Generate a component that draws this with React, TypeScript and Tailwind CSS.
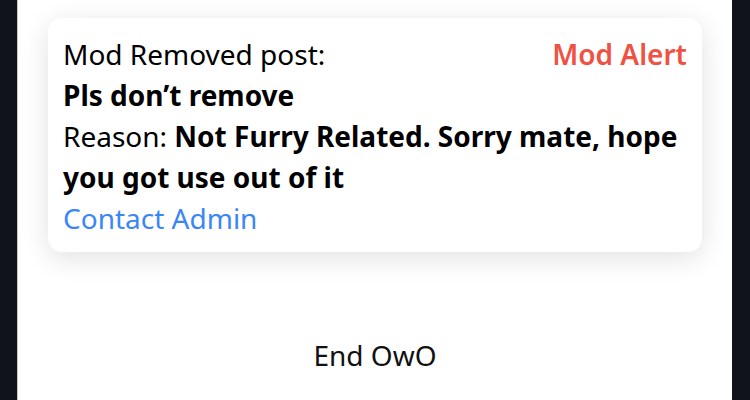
import React from 'react';

// Mod alert card inside the feed column
const ModAlertCard: React.FC = () => {
  return (
    <div className="rounded-[14px] bg-white px-[15px] pt-[16px] pb-[13px] shadow-[0_6px_28px_rgba(0,0,0,0.12)]">
      <div className="flex items-start justify-between">
        <p className="text-[28px] leading-[41px] text-black">Mod Removed post:</p>
        <p className="text-[28px] leading-[41px] font-semibold text-[#ef5143]">Mod Alert</p>
      </div>
      <p className="text-[28px] leading-[41px] font-bold text-black">Pls don’t remove</p>
      <p className="text-[28px] leading-[41px] text-black">
        Reason: <span className="font-bold">Not Furry Related. Sorry mate, hope you got use out of it</span>
      </p>
      <p className="text-[28px] leading-[41px] text-[#3b86f7]">Contact Admin</p>
    </div>
  );
};

export default function App() {
  return (
    <div
      className="flex h-[400px] w-[750px] overflow-hidden bg-[#10131b]"
      style={{ fontFamily: '"Noto Sans", "Open Sans", sans-serif' }}
    >
      <div className="ml-[17px] flex h-full w-[715px] flex-col border-l border-[#c8c8c8] bg-white px-[30px] pt-[18px]">
        <ModAlertCard />
        <div className="flex flex-1 items-start justify-center pt-[86px]">
          <p className="text-[28px] leading-[34px] text-[#111]">End OwO</p>
        </div>
      </div>
    </div>
  );
}
